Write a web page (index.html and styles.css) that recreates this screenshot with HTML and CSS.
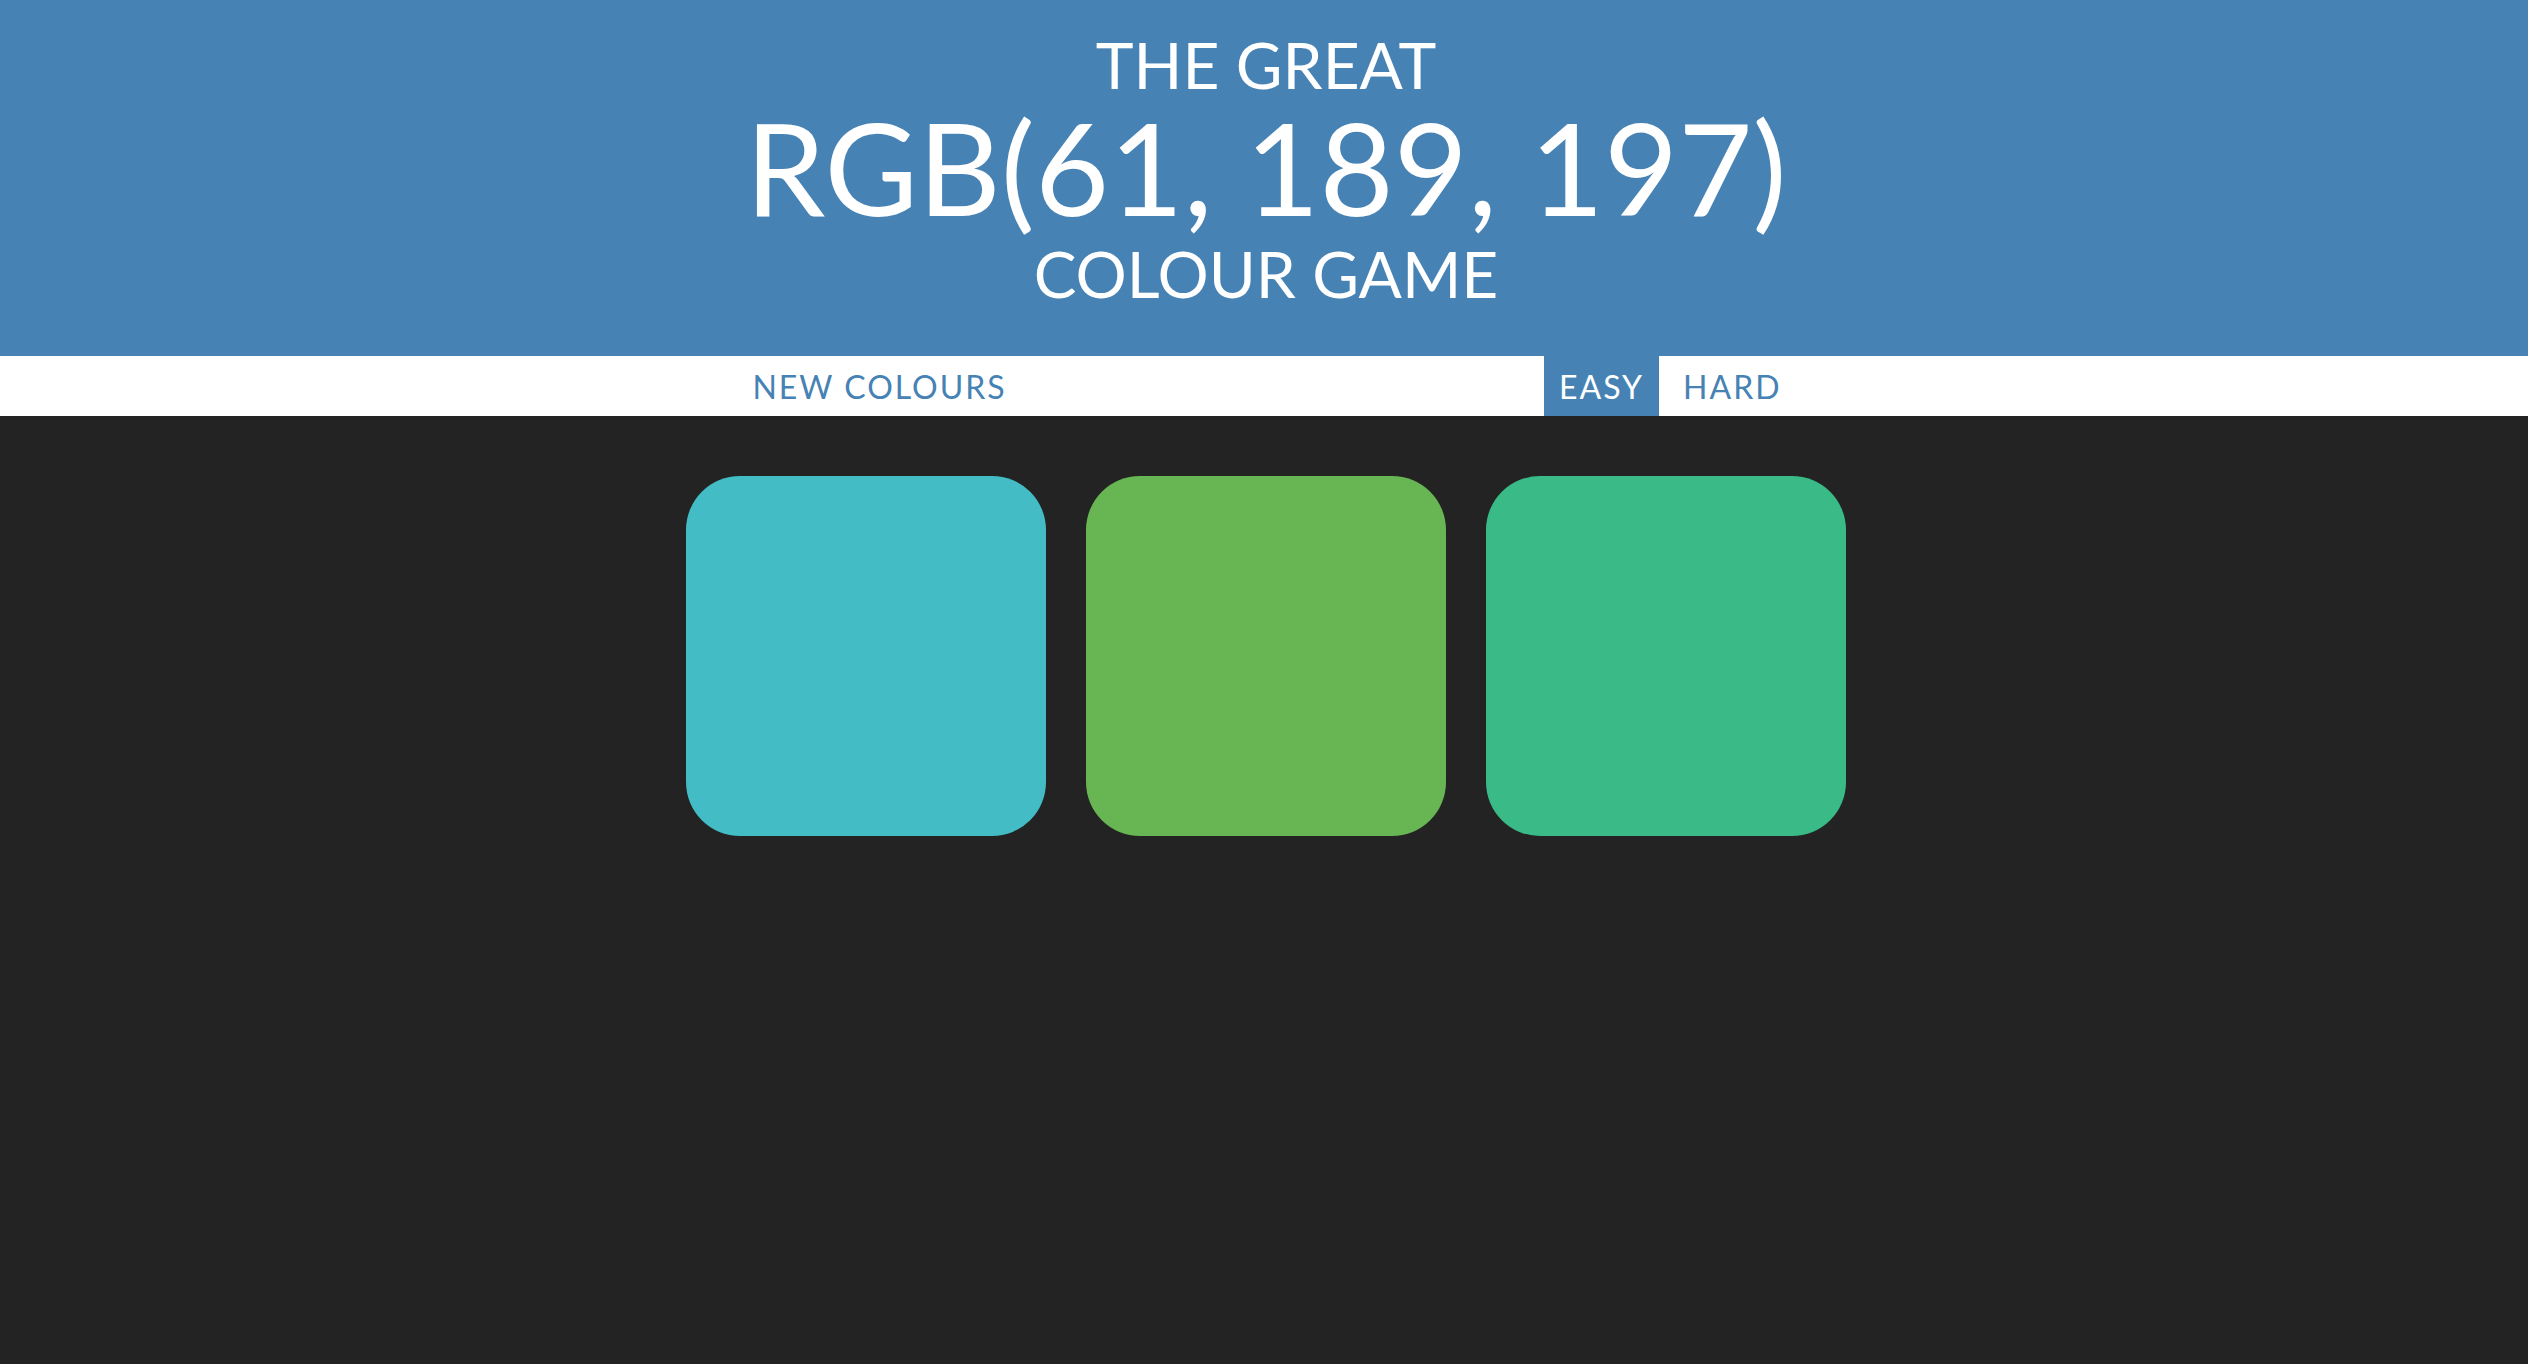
FILE: index.html
```html
<!DOCTYPE html>
<html lang="en">
<head>
  <meta charset="UTF-8"/>
  <title>Colour Game</title>
  <link rel="stylesheet" href="styles.css">
</head>
<body>

  <h1 class="banner">
    <span class="banner-top">The Great</span>
    <span class="banner-rgb" id="colour-display">RGB(61, 189, 197)</span>
    <span class="banner-bottom">Colour Game</span>
  </h1>

  <div class="stripe">
    <button class="reset-btn" id="reset">New Colours</button>
    <span class="message" id="message"></span>
    <button class="mode-btn selected">Easy</button>
    <button class="mode-btn">Hard</button>
  </div>

  <div class="board">
    <div class="square sq-cyan"></div>
    <div class="square sq-green"></div>
    <div class="square sq-teal"></div>
  </div>

</body>
</html>
```

FILE: styles.css
```css
:root {
  --steel: #4682b4;
  --bg:    #232323;
}
*,*::before,*::after { box-sizing:border-box; margin:0; padding:0 }
body {
  background: var(--bg);
  font-family: Lato, "Open Sans", sans-serif;
}
.banner {
  background: var(--steel);
  color: #fff;
  text-align: center;
  text-transform: uppercase;
  font-weight: 400;
  padding: 30px 0 41px 4px;
}
.banner span { display:block }
.banner-top    { font-size:64px;  line-height:70px }
.banner-rgb    { font-size:128px; line-height:133px }
.banner-bottom { font-size:64px;  line-height:82px }

.stripe {
  background: #fff;
  height: 60px;
  padding-left: 6px;
  display: flex;
  justify-content: center;
  align-items: stretch;
  gap: 9px;
}
.stripe button {
  border: none;
  background: none;
  padding: 0 15px;
  font-family: inherit;
  font-size: 32px;
  font-weight: 400;
  letter-spacing: 2px;
  text-transform: uppercase;
  color: var(--steel);
  cursor: pointer;
  transition: all .3s;
}
.stripe button:hover,
.stripe button.selected {
  background: var(--steel);
  color: #fff;
}
.message {
  width: 20%;
}

.board {
  display: grid;
  grid-template-columns: repeat(3, 360px);
  gap: 40px;
  justify-content: center;
  padding-left: 4px;
  margin-top: 60px;
}
.square {
  height: 360px;
  border-radius: 15%;
}
.sq-cyan  { background: #43bcc5 }
.sq-green { background: #67b553 }
.sq-teal  { background: #3aba87 }
```
